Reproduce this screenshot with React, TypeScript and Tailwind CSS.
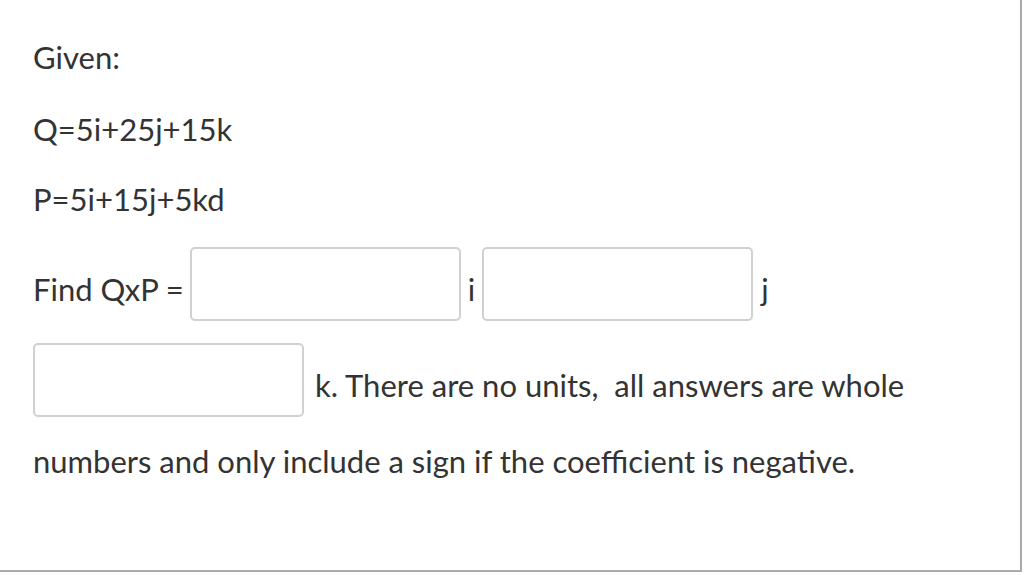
import React from "react";

function Box() {
  return (
    <input
      type="text"
      className="w-[271px] h-[74px] shrink-0 rounded-[5px] border-2 border-[#d0d0d0] bg-white outline-none"
    />
  );
}

export default function App() {
  return (
    <div className="w-[1022px] h-[572px] bg-white border-r-2 border-b-2 border-[#aaaaaa] font-['Lato',sans-serif] text-[#333333] text-[31px] pl-[33px] pt-[37px]">
      <p className="leading-[40px]">Given:</p>
      <p className="leading-[40px] mt-[32px]">Q=5i+25j+15k</p>
      <p className="leading-[40px] mt-[30px]">P=5i+15j+5kd</p>
      <div className="flex items-end mt-[28px]">
        <span className="leading-none mb-[16px] mr-[6px]">Find QxP =</span>
        <Box />
        <span className="leading-none mb-[16px] mx-[7px]">i</span>
        <Box />
        <span className="leading-none mb-[16px] ml-[8px]">j</span>
      </div>
      <div className="flex items-end mt-[22px]">
        <Box />
        <span className="leading-none mb-[16px] ml-[11px]">k. There are no units,&nbsp; all answers are whole</span>
      </div>
      <p className="leading-[40px] mt-[24px]">numbers and only include a sign if the coefficient is negative.</p>
    </div>
  );
}
